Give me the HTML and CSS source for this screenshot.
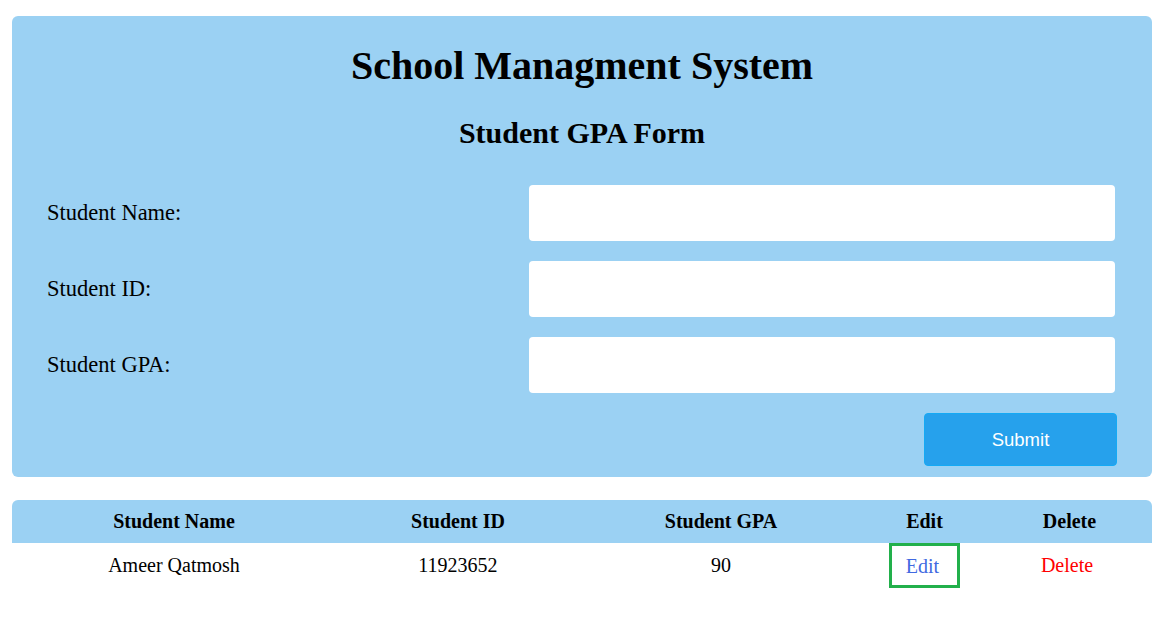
FILE: index.html
```html
<!DOCTYPE html>
<html>
<head>
<meta charset="utf-8">
<title>School Managment System</title>
<link rel="stylesheet" href="styles.css">
</head>
<body>
<div class="page">
  <section class="panel">
    <h1 class="title">School Managment System</h1>
    <h2 class="subtitle">Student GPA Form</h2>
    <form class="form">
      <div class="row">
        <label class="label">Student Name:</label>
        <input class="input" type="text">
      </div>
      <div class="row">
        <label class="label">Student ID:</label>
        <input class="input" type="text">
      </div>
      <div class="row">
        <label class="label">Student GPA:</label>
        <input class="input" type="text">
      </div>
      <div class="actions">
        <button class="submit" type="button">Submit</button>
      </div>
    </form>
  </section>

  <table class="table">
    <colgroup>
      <col class="c1"><col class="c2"><col class="c3"><col class="c4"><col class="c5">
    </colgroup>
    <thead>
      <tr>
        <th class="th-first">Student Name</th>
        <th>Student ID</th>
        <th>Student GPA</th>
        <th>Edit</th>
        <th class="th-last">Delete</th>
      </tr>
    </thead>
    <tbody>
      <tr>
        <td>Ameer Qatmosh</td>
        <td>11923652</td>
        <td>90</td>
        <td><span class="edit">Edit</span></td>
        <td class="td-delete"><span class="delete">Delete</span></td>
      </tr>
    </tbody>
  </table>
</div>
</body>
</html>
```

FILE: styles.css
```css
html, body {
  margin: 0;
  padding: 0;
  background: #ffffff;
}
body {
  font-family: "Liberation Serif", "Times New Roman", serif;
  color: #000;
}
.page {
  padding: 16px 15px 0 12px;
  display: flex;
  flex-direction: column;
  gap: 23px;
}
.panel {
  background: #9bd1f3;
  border-radius: 6px;
  padding: 24px 35px 11px 35px;
}
.title {
  margin: 0;
  text-align: center;
  font-size: 40px;
  line-height: 52px;
  font-weight: bold;
}
.subtitle {
  margin: 23px 0 0 0;
  text-align: center;
  font-size: 30px;
  line-height: 36px;
  font-weight: bold;
}
.form {
  margin-top: 34px;
  display: flex;
  flex-direction: column;
  gap: 20px;
}
.row {
  display: grid;
  grid-template-columns: 482px 586px;
  align-items: center;
}
.label {
  font-size: 22.5px;
}
.input {
  height: 56px;
  box-sizing: border-box;
  border: none;
  border-radius: 4px;
  background: #fff;
  margin: 0;
  padding: 0 10px;
}
.actions {
  display: flex;
  justify-content: flex-end;
}
.submit {
  width: 193px;
  height: 53px;
  background: #26a1ec;
  border: 1px solid #14aaf5;
  border-radius: 4px;
  color: #fff;
  font-family: "Liberation Sans", Arial, sans-serif;
  font-size: 18.5px;
}
.table {
  width: 100%;
  border-collapse: collapse;
  table-layout: fixed;
}
.c1 { width: 324px; }
.c2 { width: 244px; }
.c3 { width: 282px; }
.c4 { width: 125px; }
.c5 { width: 165px; }
.table th {
  background: #9bd1f3;
  height: 43px;
  padding: 0;
  font-size: 20px;
  font-weight: bold;
  text-align: center;
}
.th-first { border-top-left-radius: 6px; }
.th-last { border-top-right-radius: 6px; }
.table td {
  height: 44px;
  padding: 0;
  font-size: 20px;
  text-align: center;
}
.table .td-delete {
  padding-right: 5px;
}
.edit {
  display: inline-block;
  box-sizing: border-box;
  width: 71px;
  height: 45px;
  line-height: 40px;
  padding-right: 4px;
  border: 3px solid #22b04b;
  color: #4169e1;
}
.delete {
  color: #ff0000;
}
```
